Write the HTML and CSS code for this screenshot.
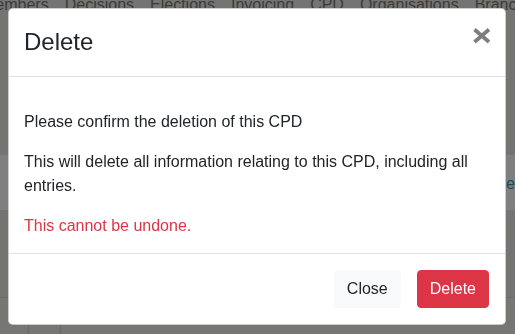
FILE: index.html
```html
<!DOCTYPE html>
<html lang="en">
<head>
<meta charset="utf-8">
<title>Delete</title>
<link rel="stylesheet" href="styles.css">
</head>
<body>
<div class="page">
  <nav class="nav">
    <span class="nav-link first">Members</span>
    <span class="nav-link">Decisions</span>
    <span class="nav-link">Elections</span>
    <span class="nav-link">Invoicing</span>
    <span class="nav-link">CPD</span>
    <span class="nav-link">Organisations</span>
    <span class="nav-link">Branches</span>
  </nav>
  <div class="area-top"></div>
  <div class="band"><span class="band-link">None</span></div>
  <div class="area-mid"></div>
  <div class="area-bottom">
    <div class="cell c1"></div>
    <div class="cell c2"></div>
    <div class="cell c3"></div>
  </div>
</div>
<div class="backdrop"></div>
<div class="modal">
  <div class="modal-content">
    <div class="modal-header">
      <h4 class="modal-title">Delete</h4>
      <button class="close" type="button" aria-label="Close">
        <svg width="20" height="18" viewBox="0 0 20 18"><path d="M2.5 2.5 L17 15 M17 2.5 L2.5 15" stroke="#000" stroke-width="3.8" fill="none"/></svg>
      </button>
    </div>
    <div class="modal-body">
      <p>Please confirm the deletion of this CPD</p>
      <p>This will delete all information relating to this CPD, including all entries.</p>
      <p class="danger">This cannot be undone.</p>
    </div>
    <div class="modal-footer">
      <button class="btn btn-light" type="button">Close</button>
      <button class="btn btn-danger" type="button">Delete</button>
    </div>
  </div>
</div>
</body>
</html>
```
FILE: styles.css
```css
html, body {
  margin: 0;
  padding: 0;
  height: 100%;
  overflow: hidden;
}
body {
  font-family: "Liberation Sans", Arial, sans-serif;
  font-size: 16px;
  line-height: 1.5;
  color: #212529;
  background: #e8e8e4;
}
.page {
  display: flex;
  flex-direction: column;
  height: 334px;
  overflow: hidden;
}
.nav {
  display: flex;
  white-space: nowrap;
  margin-top: -7px;
  margin-left: -26px;
  height: 24px;
  color: #777;
}
.nav-link {
  padding: 0 8px;
  flex: none;
}
.area-top {
  height: 138px;
}
.band {
  height: 55px;
  background: #fefefe;
  display: flex;
  justify-content: flex-end;
  align-items: center;
  overflow: hidden;
}
.band-link {
  color: #17a2b8;
  margin-right: 0;
  padding-top: 2px;
}
.area-mid {
  height: 87px;
  border-bottom: 1px solid #d4d4d0;
}
.area-bottom {
  flex: 1;
  display: flex;
  background: #ecece8;
}
.cell {
  border-right: 1px solid #cfcfcb;
}
.c1 { width: 28px; }
.c2 { width: 31px; }
.c3 { flex: 1; border-right: 0; }

.backdrop {
  position: fixed;
  inset: 0;
  background: rgba(0, 0, 0, 0.5);
}
.modal {
  position: fixed;
  inset: 0;
  padding: 8px;
}
.modal-content {
  background: #fff;
  border: 1px solid rgba(0, 0, 0, 0.2);
  border-radius: 4.8px;
  display: flex;
  flex-direction: column;
  box-sizing: border-box;
  width: 498px;
}
.modal-header {
  display: flex;
  align-items: flex-start;
  justify-content: space-between;
  padding: 15px 13px 16px 15px;
  border-bottom: 1px solid #dee2e6;
}
.modal-title {
  margin: 0;
  font-size: 24px;
  font-weight: 400;
  line-height: 36px;
}
.close {
  background: none;
  border: 0;
  padding: 0;
  margin: 3px 0 0 0;
  opacity: 0.5;
  cursor: pointer;
  display: flex;
}
.modal-body {
  padding: 33px 15px 15px;
}
.modal-body p {
  margin: 0 0 16px;
}
.modal-body p:last-child {
  margin-bottom: 0;
}
.danger {
  color: #dc3545;
}
.modal-footer {
  display: flex;
  justify-content: flex-end;
  gap: 16px;
  padding: 16px 16px 16px;
  border-top: 1px solid #dee2e6;
}
.btn {
  font-family: inherit;
  font-size: 16px;
  line-height: 24px;
  padding: 6px 12px;
  border: 1px solid transparent;
  border-radius: 4px;
  cursor: pointer;
}
.btn-light {
  background: #f8f9fa;
  border-color: #f8f9fa;
  color: #212529;
}
.btn-danger {
  background: #dc3545;
  border-color: #dc3545;
  color: #fff;
}
```
